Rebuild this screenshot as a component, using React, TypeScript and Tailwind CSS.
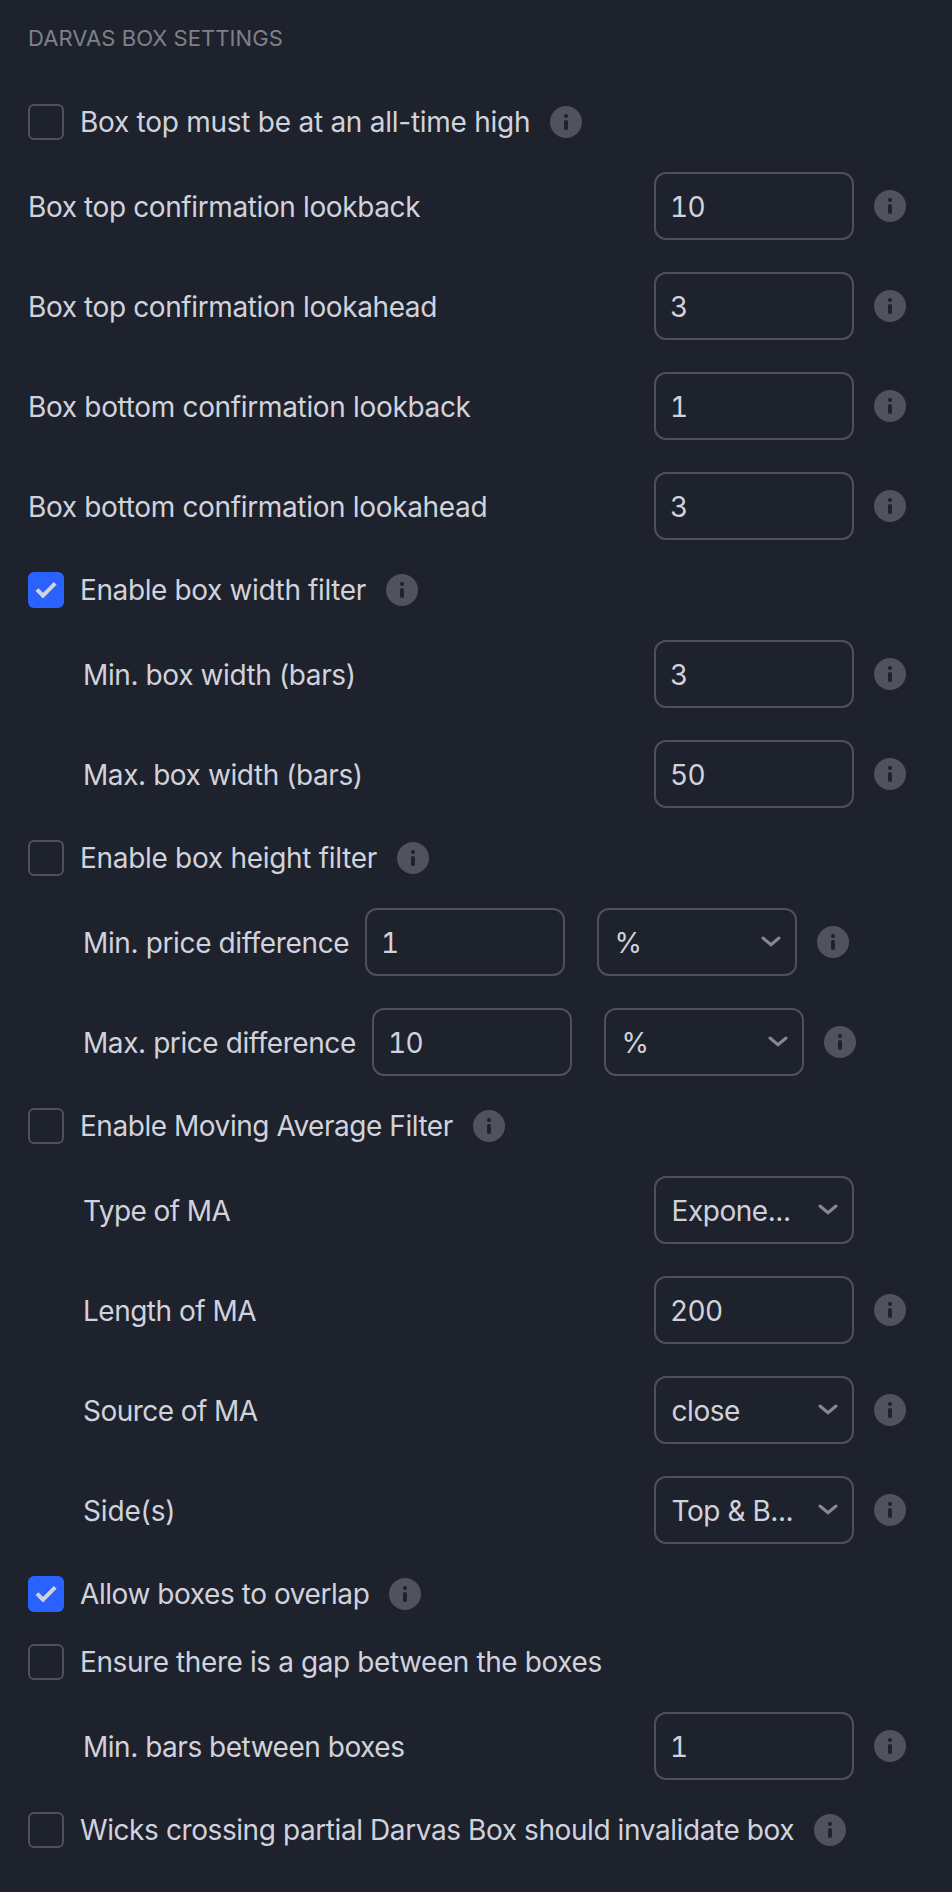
import { ReactNode } from 'react';
import clsx from 'clsx';

function InfoIcon() {
  return (
    <svg viewBox="0 0 32 32" className="h-8 w-8 shrink-0">
      <circle cx="16" cy="16" r="16" fill="#50535e" />
      <circle cx="16" cy="10" r="2" fill="#1e222d" />
      <rect x="14" y="14" width="4" height="10" rx="2" fill="#1e222d" />
    </svg>
  );
}

interface CheckRowProps {
  label: string;
  checked?: boolean;
  info?: boolean;
  className?: string;
}

function CheckRow({ label, checked = false, info = true, className = 'tracking-[-0.43px]' }: CheckRowProps) {
  return (
    <div className="flex h-[68px] items-center">
      {checked ? (
        <span className="flex h-9 w-9 items-center justify-center rounded-md bg-[#2962ff]">
          <svg viewBox="0 0 22 18" className="h-[18px] w-[22px]" fill="none" stroke="#d1d4dc" strokeWidth="4">
            <path d="M2 8.6 8 14.6 20.2 2.4" />
          </svg>
        </span>
      ) : (
        <span className="h-9 w-9 rounded-md border-2 border-[#504f5e]" />
      )}
      <span className={clsx('ml-4 mr-5 whitespace-nowrap pb-px', className)}>{label}</span>
      {info && <InfoIcon />}
    </div>
  );
}

function TextBox({ value }: { value: string }) {
  return (
    <div className="flex h-[68px] w-[200px] shrink-0 items-center rounded-xl border-2 border-[#504f5e] pl-[14px] pt-0.5 tabular-nums tracking-[-0.7px]">
      {value}
    </div>
  );
}

function SelectBox({ value }: { value: string }) {
  return (
    <div className="flex h-[68px] w-[200px] shrink-0 items-center justify-between rounded-xl border-2 border-[#504f5e] pl-[15.5px] pr-[14px]">
      <span className="pt-0.5 tracking-[-0.45px]">{value}</span>
      <svg viewBox="0 0 20 12" className="h-3 w-5" fill="none" stroke="#868993" strokeWidth="3" strokeLinecap="round">
        <path d="M2 2 10 8.7 18 2" />
      </svg>
    </div>
  );
}

interface FieldRowProps {
  label: string;
  children: ReactNode;
  indent?: boolean;
  info?: boolean;
  className?: string;
}

function FieldRow({ label, children, indent = false, info = true, className = 'tracking-[-0.39px]' }: FieldRowProps) {
  return (
    <div className={clsx('flex h-[100px] items-center', indent && 'pl-[55px]')}>
      <span className={clsx('flex-1 whitespace-nowrap pt-0.5', className)}>{label}</span>
      {children}
      <div className="ml-5 w-8">{info && <InfoIcon />}</div>
    </div>
  );
}

interface RangeRowProps {
  label: string;
  value: string;
  unit: string;
  className: string;
}

function RangeRow({ label, value, unit, className }: RangeRowProps) {
  return (
    <div className="flex h-[100px] items-center pl-[55px]">
      <span className={clsx('mr-4 whitespace-nowrap pt-0.5', className)}>{label}</span>
      <TextBox value={value} />
      <div className="ml-8 mr-5">
        <SelectBox value={unit} />
      </div>
      <InfoIcon />
    </div>
  );
}

export default function App() {
  return (
    <div className="h-[1892px] w-[952px] bg-[#1e222d] pl-7 pr-[46px] font-['Inter',sans-serif] text-[28px] leading-9 text-[#d1d2dc]">
      <h1 className="flex h-[88px] items-start pt-[22px] text-[22px] leading-8 tracking-[0.06px] text-[#7f8088]">
        DARVAS BOX SETTINGS
      </h1>
      <CheckRow label="Box top must be at an all-time high" className="tracking-[-0.26px]" />
      <FieldRow label="Box top confirmation lookback"><TextBox value="10" /></FieldRow>
      <FieldRow label="Box top confirmation lookahead"><TextBox value="3" /></FieldRow>
      <FieldRow label="Box bottom confirmation lookback" className="tracking-[-0.33px]"><TextBox value="1" /></FieldRow>
      <FieldRow label="Box bottom confirmation lookahead" className="tracking-[-0.34px]"><TextBox value="3" /></FieldRow>
      <CheckRow label="Enable box width filter" checked className="tracking-[-0.38px]" />
      <FieldRow label="Min. box width (bars)" indent><TextBox value="3" /></FieldRow>
      <FieldRow label="Max. box width (bars)" indent className="tracking-[-0.42px]"><TextBox value="50" /></FieldRow>
      <CheckRow label="Enable box height filter" className="tracking-[-0.3px]" />
      <RangeRow label="Min. price difference" value="1" unit="%" className="w-[266px] tracking-[-0.37px]" />
      <RangeRow label="Max. price difference" value="10" unit="%" className="w-[273px] tracking-[-0.42px]" />
      <CheckRow label="Enable Moving Average Filter" className="tracking-[-0.46px]" />
      <FieldRow label="Type of MA" indent info={false} className="tracking-[-0.58px]"><SelectBox value="Expone..." /></FieldRow>
      <FieldRow label="Length of MA" indent className="tracking-[-0.5px]"><TextBox value="200" /></FieldRow>
      <FieldRow label="Source of MA" indent className="tracking-[-0.55px]"><SelectBox value="close" /></FieldRow>
      <FieldRow label="Side(s)" indent className="tracking-[-0.15px]"><SelectBox value="Top & B..." /></FieldRow>
      <CheckRow label="Allow boxes to overlap" checked />
      <CheckRow label="Ensure there is a gap between the boxes" info={false} className="tracking-[-0.41px]" />
      <FieldRow label="Min. bars between boxes" indent className="tracking-[-0.48px]"><TextBox value="1" /></FieldRow>
      <CheckRow label="Wicks crossing partial Darvas Box should invalidate box" className="tracking-[-0.415px]" />
    </div>
  );
}
